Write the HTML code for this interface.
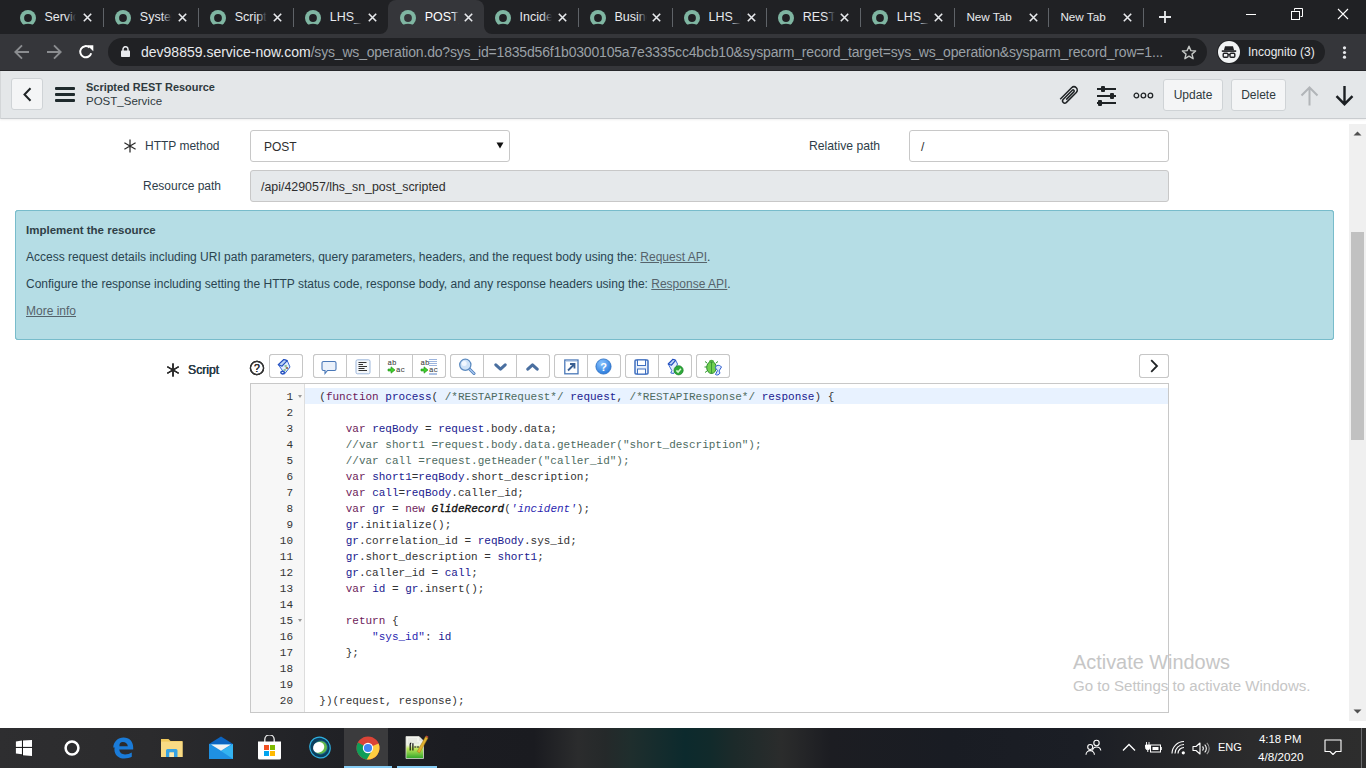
<!DOCTYPE html>
<html><head><meta charset="utf-8">
<style>
*{box-sizing:border-box;margin:0;padding:0}
html,body{width:1366px;height:768px;overflow:hidden;background:#fff;font-family:"Liberation Sans",sans-serif;position:relative}
.abs{position:absolute}
/* tab strip */
#tabs{left:0;top:0;width:1366px;height:34px;background:#202124}
.tt{position:absolute;top:9px;width:32px;height:16px;overflow:hidden;white-space:nowrap;color:#e8eaed;font-size:12.5px;line-height:16px}
.tt:after{content:"";position:absolute;right:0;top:0;width:10px;height:16px;background:linear-gradient(90deg,rgba(32,33,36,0),#202124)}
.tt.act{color:#fff;width:34px}
.tt.act:after{background:linear-gradient(90deg,rgba(53,54,58,0),#35363a);width:6px}
#active{background:#35363a;border-radius:8px 8px 0 0}
.tt.nt{width:60px;font-size:11.7px}
.tt.nt:after{display:none}
/* toolbar */
#toolbar{left:0;top:34px;width:1366px;height:37px;background:#35363a;border-bottom:1px solid #27282b}
#omni{left:108px;top:4px;width:1099px;height:28px;border-radius:14px;background:#202124}
#url{left:33px;top:5px;font-size:14px;letter-spacing:-0.185px;line-height:18px;color:#9aa0a6;white-space:nowrap}
#url b{font-weight:normal;color:#e8eaed;font-size:14px;letter-spacing:0}
#incog{left:1217px;top:6px;width:108px;height:24px;border-radius:12px;background:#202124}
/* servicenow header */
#snhead{left:0;top:71px;width:1366px;height:48px;background:#e4e7e9;border-bottom:1px solid #c9cccf;box-shadow:0 1px 2px rgba(0,0,0,0.07)}
.btn{position:absolute;background:#f4f5f6;border:1px solid #cfd3d6;border-radius:3px;color:#2f3a3e;font-size:13px;text-align:center}
/* content */
.lbl{position:absolute;font-size:12px;color:#2e3d49;line-height:14px;white-space:nowrap}
.inp{position:absolute;border:1px solid #c8c8c8;border-radius:3px;background:#fff;font-size:12px;color:#2e2e2e;line-height:14px;padding:9px 13px 0}
#info{left:15px;top:210px;width:1319px;height:130px;background:#b5dde5;border:1px solid #78bccb;border-radius:3px}
#info p{position:absolute;left:10px;font-size:12px;color:#2a4450;white-space:nowrap;line-height:14px}
#info a{color:#55636b;text-decoration:underline}
/* scrollbar */
#sb{left:1349px;top:124px;width:17px;height:597px;background:#f0f0f0}
#thumb{left:2px;top:108px;width:13px;height:208px;background:#c1c1c1}
/* editor */
#ed{left:250px;top:383px;width:919px;height:330px;border:1px solid #c8c8c8;border-top-color:#c8c8c8;background:#fff;overflow:hidden}
#gut{left:0;top:0;width:54px;height:330px;background:#f7f7f7;border-right:1px solid #ddd}
.ln{position:absolute;left:0;width:42px;text-align:right;font-family:"Liberation Mono",monospace;font-size:11px;color:#333;line-height:16px}
.cl{position:absolute;left:68.3px;font-family:"Liberation Mono",monospace;font-size:11px;color:#333;line-height:16px;white-space:pre}
.k{color:#6d1a5a}.v{color:#20208f}.c{color:#4e6b5f}.s{color:#2a1fb0}
.fold{width:0;height:0;border-left:2.5px solid transparent;border-right:2.5px solid transparent;border-top:3px solid #999}
.grp{position:absolute;top:354px;height:24px;border:1px solid #c6c6c6;border-radius:3px;background:#fff}
.grp i{position:absolute;top:0;width:1px;height:22px;background:#c6c6c6}
/* taskbar */
#task{left:0;top:728px;width:1366px;height:40px;background:linear-gradient(90deg,#2e2e30 0px,#2b2b2d 150px,#222327 300px,#1b1c21 450px,#1a1b20 534px,#2b2c2d 578px,#25292a 605px,#1f2e2d 630px,#0c2a2d 685px,#112a2b 710px,#1c2a2a 734px,#2b2c2c 782px,#1c1d22 830px,#191c23 950px,#1b1e25 1080px,#232427 1160px,#2b2b2c 1250px,#2d2d2d 1366px)}
</style></head><body>

<div id="tabs" class="abs">
<div class="abs" id="active" style="left:388px;top:0;width:96px;height:34px"></div>
<svg class="abs" style="left:380px;top:26px" width="8" height="8" viewBox="0 0 8 8"><path d="M0 8A8 8 0 0 0 8 0V8Z" fill="#35363a"/></svg>
<svg class="abs" style="left:484px;top:26px" width="8" height="8" viewBox="0 0 8 8"><path d="M8 8A8 8 0 0 1 0 0V8Z" fill="#35363a"/></svg>
<svg class="abs fav" style="left:19.6px;top:9.5px" width="16" height="16" viewBox="0 0 16 16"><circle cx="8" cy="8" r="8" fill="#7fb6a2"/><circle cx="8" cy="8" r="3.9" fill="#202124"/><ellipse cx="8" cy="16.6" rx="5" ry="2.9" fill="#202124"/></svg>
<div class="tt" style="left:44.4px">Servic</div>
<svg class="abs" style="left:83.4px;top:12.5px" width="9" height="9" viewBox="0 0 9 9"><path d="M0.8 0.8L8.2 8.2M8.2 0.8L0.8 8.2" stroke="#e8eaed" stroke-width="1.6"/></svg>
<svg class="abs fav" style="left:115.0px;top:9.5px" width="16" height="16" viewBox="0 0 16 16"><circle cx="8" cy="8" r="8" fill="#7fb6a2"/><circle cx="8" cy="8" r="3.9" fill="#202124"/><ellipse cx="8" cy="16.6" rx="5" ry="2.9" fill="#202124"/></svg>
<div class="tt" style="left:139.8px">System</div>
<svg class="abs" style="left:178.3px;top:12.5px" width="9" height="9" viewBox="0 0 9 9"><path d="M0.8 0.8L8.2 8.2M8.2 0.8L0.8 8.2" stroke="#e8eaed" stroke-width="1.6"/></svg>
<svg class="abs fav" style="left:209.9px;top:9.5px" width="16" height="16" viewBox="0 0 16 16"><circle cx="8" cy="8" r="8" fill="#7fb6a2"/><circle cx="8" cy="8" r="3.9" fill="#202124"/><ellipse cx="8" cy="16.6" rx="5" ry="2.9" fill="#202124"/></svg>
<div class="tt" style="left:234.7px">Scripte</div>
<svg class="abs" style="left:273.1px;top:12.5px" width="9" height="9" viewBox="0 0 9 9"><path d="M0.8 0.8L8.2 8.2M8.2 0.8L0.8 8.2" stroke="#e8eaed" stroke-width="1.6"/></svg>
<svg class="abs fav" style="left:305.0px;top:9.5px" width="16" height="16" viewBox="0 0 16 16"><circle cx="8" cy="8" r="8" fill="#7fb6a2"/><circle cx="8" cy="8" r="3.9" fill="#202124"/><ellipse cx="8" cy="16.6" rx="5" ry="2.9" fill="#202124"/></svg>
<div class="tt" style="left:329.8px">LHS_S</div>
<svg class="abs" style="left:368.2px;top:12.5px" width="9" height="9" viewBox="0 0 9 9"><path d="M0.8 0.8L8.2 8.2M8.2 0.8L0.8 8.2" stroke="#e8eaed" stroke-width="1.6"/></svg>
<svg class="abs fav" style="left:399.9px;top:9.5px" width="16" height="16" viewBox="0 0 16 16"><circle cx="8" cy="8" r="8" fill="#7fb6a2"/><circle cx="8" cy="8" r="3.9" fill="#35363a"/><ellipse cx="8" cy="16.6" rx="5" ry="2.9" fill="#35363a"/></svg>
<div class="tt act" style="left:424.7px">POST_</div>
<svg class="abs" style="left:463.5px;top:12.5px" width="9" height="9" viewBox="0 0 9 9"><path d="M0.8 0.8L8.2 8.2M8.2 0.8L0.8 8.2" stroke="#e8eaed" stroke-width="1.6"/></svg>
<svg class="abs fav" style="left:494.8px;top:9.5px" width="16" height="16" viewBox="0 0 16 16"><circle cx="8" cy="8" r="8" fill="#7fb6a2"/><circle cx="8" cy="8" r="3.9" fill="#202124"/><ellipse cx="8" cy="16.6" rx="5" ry="2.9" fill="#202124"/></svg>
<div class="tt" style="left:519.6px">Incide</div>
<svg class="abs" style="left:558.1px;top:12.5px" width="9" height="9" viewBox="0 0 9 9"><path d="M0.8 0.8L8.2 8.2M8.2 0.8L0.8 8.2" stroke="#e8eaed" stroke-width="1.6"/></svg>
<svg class="abs fav" style="left:589.7px;top:9.5px" width="16" height="16" viewBox="0 0 16 16"><circle cx="8" cy="8" r="8" fill="#7fb6a2"/><circle cx="8" cy="8" r="3.9" fill="#202124"/><ellipse cx="8" cy="16.6" rx="5" ry="2.9" fill="#202124"/></svg>
<div class="tt" style="left:614.5px">Busine</div>
<svg class="abs" style="left:652.1px;top:12.5px" width="9" height="9" viewBox="0 0 9 9"><path d="M0.8 0.8L8.2 8.2M8.2 0.8L0.8 8.2" stroke="#e8eaed" stroke-width="1.6"/></svg>
<svg class="abs fav" style="left:683.7px;top:9.5px" width="16" height="16" viewBox="0 0 16 16"><circle cx="8" cy="8" r="8" fill="#7fb6a2"/><circle cx="8" cy="8" r="3.9" fill="#202124"/><ellipse cx="8" cy="16.6" rx="5" ry="2.9" fill="#202124"/></svg>
<div class="tt" style="left:708.5px">LHS_F</div>
<svg class="abs" style="left:746.6px;top:12.5px" width="9" height="9" viewBox="0 0 9 9"><path d="M0.8 0.8L8.2 8.2M8.2 0.8L0.8 8.2" stroke="#e8eaed" stroke-width="1.6"/></svg>
<svg class="abs fav" style="left:777.9px;top:9.5px" width="16" height="16" viewBox="0 0 16 16"><circle cx="8" cy="8" r="8" fill="#7fb6a2"/><circle cx="8" cy="8" r="3.9" fill="#202124"/><ellipse cx="8" cy="16.6" rx="5" ry="2.9" fill="#202124"/></svg>
<div class="tt" style="left:802.7px">REST</div>
<svg class="abs" style="left:840.2px;top:12.5px" width="9" height="9" viewBox="0 0 9 9"><path d="M0.8 0.8L8.2 8.2M8.2 0.8L0.8 8.2" stroke="#e8eaed" stroke-width="1.6"/></svg>
<svg class="abs fav" style="left:871.9px;top:9.5px" width="16" height="16" viewBox="0 0 16 16"><circle cx="8" cy="8" r="8" fill="#7fb6a2"/><circle cx="8" cy="8" r="3.9" fill="#202124"/><ellipse cx="8" cy="16.6" rx="5" ry="2.9" fill="#202124"/></svg>
<div class="tt" style="left:896.7px">LHS_S</div>
<svg class="abs" style="left:934.2px;top:12.5px" width="9" height="9" viewBox="0 0 9 9"><path d="M0.8 0.8L8.2 8.2M8.2 0.8L0.8 8.2" stroke="#e8eaed" stroke-width="1.6"/></svg>
<div class="abs" style="left:102.9px;top:8px;width:1px;height:19px;background:#5f6368"></div>
<div class="abs" style="left:198.1px;top:8px;width:1px;height:19px;background:#5f6368"></div>
<div class="abs" style="left:293.0px;top:8px;width:1px;height:19px;background:#5f6368"></div>
<div class="abs" style="left:577.9px;top:8px;width:1px;height:19px;background:#5f6368"></div>
<div class="abs" style="left:672.2px;top:8px;width:1px;height:19px;background:#5f6368"></div>
<div class="abs" style="left:766.1px;top:8px;width:1px;height:19px;background:#5f6368"></div>
<div class="abs" style="left:860.0px;top:8px;width:1px;height:19px;background:#5f6368"></div>
<div class="abs" style="left:954.0px;top:8px;width:1px;height:19px;background:#5f6368"></div>
<div class="abs" style="left:1048.1px;top:8px;width:1px;height:19px;background:#5f6368"></div>
<div class="abs" style="left:1142.5px;top:8px;width:1px;height:19px;background:#5f6368"></div>
<div class="tt nt" style="left:966.4px">New Tab</div>
<svg class="abs" style="left:1028.5px;top:12.5px" width="9" height="9" viewBox="0 0 9 9"><path d="M0.8 0.8L8.2 8.2M8.2 0.8L0.8 8.2" stroke="#e8eaed" stroke-width="1.6"/></svg>
<div class="tt nt" style="left:1060.4px">New Tab</div>
<svg class="abs" style="left:1122.5px;top:12.5px" width="9" height="9" viewBox="0 0 9 9"><path d="M0.8 0.8L8.2 8.2M8.2 0.8L0.8 8.2" stroke="#e8eaed" stroke-width="1.6"/></svg>
<svg class="abs" style="left:1158px;top:10px" width="14" height="14" viewBox="0 0 14 14"><path d="M7 1V13M1 7H13" stroke="#e8eaed" stroke-width="1.8"/></svg>
<div class="abs" style="left:1246px;top:14px;width:10px;height:1px;background:#fff"></div>
<svg class="abs" style="left:1291px;top:8px" width="12" height="12" viewBox="0 0 12 12"><path d="M3.5 2.5V0.5H11.5V8.5H9.5" fill="none" stroke="#fff" stroke-width="1"/><rect x="0.5" y="3.5" width="8" height="8" fill="none" stroke="#fff" stroke-width="1"/></svg>
<svg class="abs" style="left:1337px;top:8px" width="12" height="12" viewBox="0 0 12 12"><path d="M1 1L11 11M11 1L1 11" stroke="#fff" stroke-width="1.1"/></svg>
</div>
<div id="toolbar" class="abs">
  <div id="omni" class="abs">
    <svg class="abs" style="left:13px;top:8px" width="9" height="11" viewBox="0 0 9 11"><path d="M2 5V3.2A2.5 2.5 0 0 1 7 3.2V5" fill="none" stroke="#e8eaed" stroke-width="1.5"/><rect x="0" y="4.6" width="9" height="6.4" rx="0.8" fill="#e8eaed"/></svg>
    <div id="url" class="abs"><b>dev98859.service-now.com</b>/sys_ws_operation.do?sys_id=1835d56f1b0300105a7e3335cc4bcb10&amp;sysparm_record_target=sys_ws_operation&amp;sysparm_record_row=1...</div>
  </div>
  <div id="incog" class="abs">
    <svg class="abs" style="left:1px;top:1px" width="22" height="22" viewBox="0 0 22 22"><circle cx="11" cy="11" r="11" fill="#f1f3f4"/><path d="M7 5.2h8l1.2 4.3H5.8z" fill="#202124"/><rect x="3.8" y="9.3" width="14.4" height="1.6" fill="#202124"/><rect x="5.2" y="12.2" width="4.8" height="4" rx="1" fill="none" stroke="#202124" stroke-width="1.4"/><rect x="12" y="12.2" width="4.8" height="4" rx="1" fill="none" stroke="#202124" stroke-width="1.4"/><path d="M10 13.6h2" stroke="#202124" stroke-width="1.2"/></svg>
    <div class="abs" style="left:31px;top:4px;font-size:12px;line-height:16px;color:#e8eaed;white-space:nowrap">Incognito (3)</div>
  </div>
  <svg class="abs" style="left:1342px;top:12px" width="5" height="13" viewBox="0 0 5 13"><circle cx="2.5" cy="1.8" r="1.6" fill="#e8eaed"/><circle cx="2.5" cy="6.5" r="1.6" fill="#e8eaed"/><circle cx="2.5" cy="11.2" r="1.6" fill="#e8eaed"/></svg>
  <svg class="abs" style="left:14px;top:10px" width="16" height="16" viewBox="0 0 16 16"><path d="M15 8H2M8 1.3L1.3 8L8 14.7" fill="none" stroke="#8b8d90" stroke-width="1.9"/></svg>
  <svg class="abs" style="left:46px;top:10px" width="16" height="16" viewBox="0 0 16 16"><path d="M1 8H14M8 1.3L14.7 8L8 14.7" fill="none" stroke="#8b8d90" stroke-width="1.9"/></svg>
  <svg class="abs" style="left:78px;top:10px" width="16" height="16" viewBox="0 0 16 16"><path d="M13.2 9.2A5.6 5.6 0 1 1 11.5 3.5" fill="none" stroke="#fff" stroke-width="2"/><path d="M9.2 1.2H15.3V7.3z" fill="#fff"/></svg>
  <svg class="abs" style="left:1181px;top:11px" width="16" height="15" viewBox="0 0 16 15"><path d="M8 1.2L9.9 5.6L14.6 6L11 9.1L12.1 13.7L8 11.2L3.9 13.7L5 9.1L1.4 6L6.1 5.6z" fill="none" stroke="#c4c7c5" stroke-width="1.4" stroke-linejoin="round"/></svg>
</div>

<div id="snhead" class="abs">
  <div class="abs" style="left:0;top:0;width:1px;height:48px;background:#d3d6d8"></div>
  <div class="btn" style="left:11px;top:7px;width:32px;height:32px"></div>
  <svg class="abs" style="left:22px;top:16px" width="11" height="15" viewBox="0 0 11 15"><path d="M8.5 1.2L2.5 7.5L8.5 13.8" fill="none" stroke="#1f2426" stroke-width="2"/></svg>
  <div class="abs" style="left:55px;top:16px;width:20px;height:3px;background:#1f2a2c;border-radius:1px"></div>
  <div class="abs" style="left:55px;top:22px;width:20px;height:3px;background:#1f2a2c;border-radius:1px"></div>
  <div class="abs" style="left:55px;top:28px;width:20px;height:3px;background:#1f2a2c;border-radius:1px"></div>
  <div class="abs" style="left:86px;top:9px;font-size:10.95px;line-height:14px;font-weight:bold;color:#2f3a3e;white-space:nowrap">Scripted REST Resource</div>
  <div class="abs" style="left:86px;top:23px;font-size:11.5px;line-height:14px;color:#2f3a3e;white-space:nowrap">POST_Service</div>
  <svg class="abs" style="left:1059px;top:13px" width="21" height="21" viewBox="0 0 21 21"><path d="M1.2 15.2L12.6 3.8A3.3 3.3 0 0 1 17.3 8.5L7.2 18.6A2.2 2.2 0 0 1 4.1 15.5L13.3 6.3A1.1 1.1 0 0 1 14.9 7.9L7.2 15.6" fill="none" stroke="#1f2325" stroke-width="1.5"/></svg>
  <div class="abs" style="left:1097px;top:17px;width:19px;height:2px;background:#1f2325"></div>
  <div class="abs" style="left:1097px;top:24px;width:19px;height:2px;background:#1f2325"></div>
  <div class="abs" style="left:1097px;top:31px;width:19px;height:2px;background:#1f2325"></div>
  <div class="abs" style="left:1101px;top:14.5px;width:4px;height:6px;background:#1f2325;border-radius:1px"></div>
  <div class="abs" style="left:1110px;top:21.5px;width:4px;height:6px;background:#1f2325;border-radius:1px"></div>
  <div class="abs" style="left:1098px;top:28.5px;width:4px;height:6px;background:#1f2325;border-radius:1px"></div>
  <svg class="abs" style="left:1133px;top:21px" width="21" height="7" viewBox="0 0 21 7"><circle cx="3.4" cy="3.5" r="2.3" fill="none" stroke="#1f2325" stroke-width="1.3"/><circle cx="10.4" cy="3.5" r="2.3" fill="none" stroke="#1f2325" stroke-width="1.3"/><circle cx="17.4" cy="3.5" r="2.3" fill="none" stroke="#1f2325" stroke-width="1.3"/></svg>
  <div class="btn" style="left:1163px;top:8px;width:60px;height:32px;line-height:30px;font-size:12px">Update</div>
  <div class="btn" style="left:1231px;top:8px;width:55px;height:32px;line-height:30px;font-size:12px">Delete</div>
  <svg class="abs" style="left:1300px;top:15px" width="19" height="20" viewBox="0 0 19 20"><path d="M9.5 19.5V1.5M1.5 9.5L9.5 1.5L17.5 9.5" fill="none" stroke="#b1b5b8" stroke-width="2"/></svg>
  <svg class="abs" style="left:1335px;top:15px" width="19" height="20" viewBox="0 0 19 20"><path d="M9.5 0V18.2M1.5 10.2L9.5 18.2L17.5 10.2" fill="none" stroke="#1b1f22" stroke-width="2.4"/></svg>
</div>

<svg class="abs" style="left:123px;top:139px" width="14" height="14" viewBox="0 0 14 14"><path d="M7 0.5V13.5M1.4 3.8L12.6 10.2M12.6 3.8L1.4 10.2" stroke="#2a2a2a" stroke-width="1.25"/></svg>
<div class="lbl" style="left:145px;top:139px">HTTP method</div>
<div class="inp" style="left:250px;top:130px;width:260px;height:32px">POST</div>
<svg class="abs" style="left:496px;top:142px" width="8" height="7" viewBox="0 0 8 7"><path d="M0.5 0.5H7.5L4 6.5Z" fill="#111"/></svg>
<div class="lbl" style="left:809px;top:139px;font-size:12.2px">Relative path</div>
<div class="inp" style="left:909px;top:130px;width:260px;height:32px;padding-left:11px">/</div>
<div class="lbl" style="left:143px;top:179px">Resource path</div>
<div class="inp" style="left:250px;top:170px;width:919px;height:32px;background:#e6e9eb;padding-left:10px;font-size:12.4px">/api/429057/lhs_sn_post_scripted</div>

<div id="info" class="abs">
  <p style="top:11.5px;font-weight:bold;font-size:11.5px;color:#2f3f47">Implement the resource</p>
  <p style="top:39px">Access request details including URI path parameters, query parameters, headers, and the request body using the: <a>Request API</a>.</p>
  <p style="top:66.3px">Configure the response including setting the HTTP status code, response body, and any response headers using the: <a>Response API</a>.</p>
  <p style="top:93px"><a>More info</a></p>
</div>

<svg class="abs" style="left:166px;top:363px" width="14" height="14" viewBox="0 0 14 14"><path d="M7 0.5V13.5M1.4 3.8L12.6 10.2M12.6 3.8L1.4 10.2" stroke="#2a2a2a" stroke-width="1.25"/></svg>
<div class="lbl" style="left:188px;top:363px;font-size:12.2px">Script</div>
<div class="grp" style="left:269px;width:34px"></div>
<div class="grp" style="left:313px;width:133px"><i style="left:32px"></i><i style="left:65px"></i><i style="left:98px"></i></div>
<div class="grp" style="left:450px;width:100px"><i style="left:32px"></i><i style="left:65px"></i></div>
<div class="grp" style="left:554px;width:67px"><i style="left:32px"></i></div>
<div class="grp" style="left:625px;width:67px"><i style="left:32px"></i></div>
<div class="grp" style="left:696px;width:34px"></div>
<div class="grp" style="left:1139px;width:30px"></div>
<svg class="abs" style="left:1150px;top:359px" width="9" height="14" viewBox="0 0 9 14"><path d="M1.2 1.2L7 7L1.2 12.8" fill="none" stroke="#1f2325" stroke-width="1.8"/></svg>
<!-- help circle -->
<svg class="abs" style="left:249px;top:360px" width="16" height="16" viewBox="0 0 16 16"><circle cx="8" cy="8" r="6.6" fill="none" stroke="#333" stroke-width="1.2"/><text x="8" y="11.8" text-anchor="middle" font-family="Liberation Sans" font-size="10.5" fill="#333">?</text></svg>
<!-- script scroll icon -->
<svg class="abs" style="left:277px;top:358px" width="16" height="18" viewBox="0 0 16 18"><path d="M1.6 6.6L9.6 1.8L12.8 8.8L4.6 15.3Z" fill="#eef4fd" stroke="#4a78d8" stroke-width="0.9" stroke-linejoin="round"/><path d="M1.8 6.3L9.6 1.6" stroke="#2048b8" stroke-width="3.2" stroke-linecap="round"/><path d="M2.6 6L9.2 2" stroke="#b8d0f6" stroke-width="1.2" stroke-linecap="round"/><path d="M4.2 14.8L12.4 8.6" stroke="#6a94e0" stroke-width="1.2"/><circle cx="4.4" cy="14.8" r="1.9" fill="#dce8fb" stroke="#2048b8" stroke-width="1.3"/><path d="M6.8 7.6H9.6M7.2 11.4H9.6" stroke="#3b9b3b" stroke-width="1.1"/><path d="M8.4 9.5H11" stroke="#a8342a" stroke-width="1.1"/></svg>
<!-- comment -->
<svg class="abs" style="left:321px;top:360px" width="16" height="15" viewBox="0 0 16 15"><path d="M2.5 1.5H13.5A1.5 1.5 0 0 1 15 3V9A1.5 1.5 0 0 1 13.5 10.5H6.5L4 13.5V10.5H2.5A1.5 1.5 0 0 1 1 9V3A1.5 1.5 0 0 1 2.5 1.5Z" fill="#eaf1fb" stroke="#4a78b8" stroke-width="1.1"/></svg>
<!-- format -->
<svg class="abs" style="left:355px;top:359px" width="16" height="16" viewBox="0 0 16 16"><rect x="1" y="0.8" width="14" height="14" rx="1.5" fill="#f4f7fb" stroke="#9db7dc" stroke-width="1"/><path d="M3.5 3.5H11.5M3.5 5.5H8M3.5 7.5H12M3.5 9.5H9.5M3.5 11.5H12" stroke="#333" stroke-width="1"/></svg>
<!-- replace -->
<svg class="abs" style="left:387px;top:359px" width="18" height="16" viewBox="0 0 18 16"><text x="0.5" y="6" font-family="Liberation Mono" font-size="7.5" fill="#333">ab</text><path d="M1 10H4V7.8L8 11L4 14.2V12H1Z" fill="#3fd02a" stroke="#1e8a17" stroke-width="0.6"/><text x="9" y="13" font-family="Liberation Mono" font-size="7.5" fill="#333">ac</text></svg>
<!-- replace all -->
<svg class="abs" style="left:420px;top:359px" width="18" height="16" viewBox="0 0 18 16"><text x="0.5" y="6" font-family="Liberation Mono" font-size="7.5" fill="#333">ab</text><path d="M9 0.5H17M9 2.5H17M9 4.5H17M9 6.5H17" stroke="#5a83c8" stroke-width="0.6"/><path d="M1 10H4V7.8L8 11L4 14.2V12H1Z" fill="#3fd02a" stroke="#1e8a17" stroke-width="0.6"/><text x="9" y="13" font-family="Liberation Mono" font-size="7.5" fill="#333">ac</text><path d="M9 15H17" stroke="#5a83c8" stroke-width="1"/></svg>
<!-- search -->
<svg class="abs" style="left:458px;top:358px" width="18" height="18" viewBox="0 0 18 18"><path d="M11.5 11L16 15.5" stroke="#4d7dbb" stroke-width="3" stroke-linecap="round"/><path d="M11.5 11L16 15.5" stroke="#a9c8ee" stroke-width="1.4" stroke-linecap="round"/><circle cx="7.3" cy="6.8" r="5.6" fill="#cfe3f8" stroke="#5b8ac0" stroke-width="1.3"/><circle cx="6.2" cy="5.6" r="2.5" fill="#f2f8ff"/></svg>
<!-- down chevron -->
<svg class="abs" style="left:494px;top:363px" width="13" height="9" viewBox="0 0 13 9"><path d="M1.8 1.8L6.5 6.2L11.2 1.8" fill="none" stroke="#4a6fa0" stroke-width="3" stroke-linejoin="round" stroke-linecap="round"/></svg>
<!-- up chevron -->
<svg class="abs" style="left:526px;top:362px" width="13" height="9" viewBox="0 0 13 9"><path d="M1.8 7.2L6.5 2.8L11.2 7.2" fill="none" stroke="#4a6fa0" stroke-width="3" stroke-linejoin="round" stroke-linecap="round"/></svg>
<!-- fullscreen -->
<svg class="abs" style="left:564px;top:359px" width="15" height="16" viewBox="0 0 15 16"><rect x="0.8" y="1" width="13.2" height="13.8" fill="#fff" stroke="#4a78b8" stroke-width="1.3"/><path d="M2 2.3H13" stroke="#b9cde8" stroke-width="1"/><path d="M4 11.5L10 5.5M6 5H10.5V9.5" fill="none" stroke="#3a5f92" stroke-width="1.8"/></svg>
<!-- help blue -->
<svg class="abs" style="left:595px;top:358px" width="17" height="17" viewBox="0 0 17 17"><defs><radialGradient id="hb" cx="0.4" cy="0.3" r="0.8"><stop offset="0" stop-color="#8ac4ff"/><stop offset="1" stop-color="#1f73d8"/></radialGradient></defs><circle cx="8.5" cy="8.5" r="7.6" fill="url(#hb)" stroke="#2a6cc0" stroke-width="0.8"/><text x="8.5" y="12.5" text-anchor="middle" font-family="Liberation Sans" font-weight="bold" font-size="11" fill="#fff">?</text></svg>
<!-- save -->
<svg class="abs" style="left:634px;top:359px" width="15" height="16" viewBox="0 0 15 16"><rect x="1" y="1" width="13" height="14" rx="1" fill="#e8f0fb" stroke="#3f6fc0" stroke-width="1.5"/><rect x="3.5" y="1" width="8" height="5.5" fill="#fff" stroke="#3f6fc0" stroke-width="1"/><rect x="3.5" y="10" width="8" height="5" fill="#fff" stroke="#3f6fc0" stroke-width="1"/></svg>
<!-- check script -->
<svg class="abs" style="left:667px;top:358px" width="18" height="18" viewBox="0 0 18 18"><path d="M1.4 6.8L9.4 1.8L11.5 8L3.8 15.3Z" fill="#eef4fd" stroke="#4a78d8" stroke-width="0.9" stroke-linejoin="round"/><path d="M1.6 6.5L9.4 1.6" stroke="#2048b8" stroke-width="3" stroke-linecap="round"/><path d="M2.4 6.2L9 2" stroke="#b8d0f6" stroke-width="1.1" stroke-linecap="round"/><circle cx="3.8" cy="14.8" r="1.7" fill="#dce8fb" stroke="#2048b8" stroke-width="1.2"/><circle cx="11.6" cy="12.3" r="4.5" fill="#2da83a" stroke="#1b7f27" stroke-width="0.7"/><path d="M9.4 12.4L11.1 14.1L13.9 10.8" fill="none" stroke="#d9f7d6" stroke-width="1.5"/></svg>
<!-- debug -->
<svg class="abs" style="left:704px;top:358px" width="19" height="18" viewBox="0 0 19 18"><path d="M3.8 5.5L1 4.6M3.2 9.5H0.6M3.8 13.8L1 15M10.6 5.5L13 4.6" stroke="#2d8a2d" stroke-width="1"/><ellipse cx="7.2" cy="10" rx="3.7" ry="5.8" fill="#5fcf4f" stroke="#2d8a2d" stroke-width="0.9"/><ellipse cx="7.2" cy="3.6" rx="2.5" ry="1.6" fill="#3fa03a"/><path d="M7.2 5V15.3" stroke="#b9efb0" stroke-width="1"/><path d="M10.6 10.8L16.4 6.6L17.6 12.6L11.4 17Z" fill="#eef4fd" stroke="#4a78d8" stroke-width="0.9" stroke-linejoin="round"/><path d="M10.8 10.6L16.4 6.6" stroke="#2048b8" stroke-width="2.6" stroke-linecap="round"/><circle cx="11.6" cy="16.2" r="1.5" fill="#dce8fb" stroke="#2048b8" stroke-width="1.1"/></svg>
<div id="info" class="abs">
  <p style="top:11.5px;font-weight:bold;font-size:11.5px;color:#2f3f47">Implement the resource</p>
  <p style="top:39px">Access request details including URI path parameters, query parameters, headers, and the request body using the: <a>Request API</a>.</p>
  <p style="top:66.3px">Configure the response including setting the HTTP status code, response body, and any response headers using the: <a>Response API</a>.</p>
  <p style="top:93px"><a>More info</a></p>
</div>

<svg class="abs" style="left:166px;top:363px" width="14" height="14" viewBox="0 0 14 14"><path d="M7 0.5V13.5M1.4 3.8L12.6 10.2M12.6 3.8L1.4 10.2" stroke="#2a2a2a" stroke-width="1.25"/></svg>
<div class="lbl" style="left:188px;top:363px;font-size:12.2px">Script</div>
<div class="grp" style="left:269px;width:34px"></div>
<div class="grp" style="left:313px;width:133px"><i style="left:32px"></i><i style="left:65px"></i><i style="left:98px"></i></div>
<div class="grp" style="left:450px;width:100px"><i style="left:32px"></i><i style="left:65px"></i></div>
<div class="grp" style="left:554px;width:67px"><i style="left:32px"></i></div>
<div class="grp" style="left:625px;width:67px"><i style="left:32px"></i></div>
<div class="grp" style="left:696px;width:34px"></div>
<div class="grp" style="left:1139px;width:30px"></div>
<svg class="abs" style="left:1150px;top:359px" width="9" height="14" viewBox="0 0 9 14"><path d="M1.2 1.2L7 7L1.2 12.8" fill="none" stroke="#1f2325" stroke-width="1.8"/></svg>
<!-- help circle -->
<svg class="abs" style="left:249px;top:360px" width="16" height="16" viewBox="0 0 16 16"><circle cx="8" cy="8" r="6.6" fill="none" stroke="#333" stroke-width="1.2"/><text x="8" y="11.8" text-anchor="middle" font-family="Liberation Sans" font-size="10.5" fill="#333">?</text></svg>
<!-- script scroll icon -->
<svg class="abs" style="left:277px;top:358px" width="16" height="18" viewBox="0 0 16 18"><path d="M1.6 6.6L9.6 1.8L12.8 8.8L4.6 15.3Z" fill="#eef4fd" stroke="#4a78d8" stroke-width="0.9" stroke-linejoin="round"/><path d="M1.8 6.3L9.6 1.6" stroke="#2048b8" stroke-width="3.2" stroke-linecap="round"/><path d="M2.6 6L9.2 2" stroke="#b8d0f6" stroke-width="1.2" stroke-linecap="round"/><path d="M4.2 14.8L12.4 8.6" stroke="#6a94e0" stroke-width="1.2"/><circle cx="4.4" cy="14.8" r="1.9" fill="#dce8fb" stroke="#2048b8" stroke-width="1.3"/><path d="M6.8 7.6H9.6M7.2 11.4H9.6" stroke="#3b9b3b" stroke-width="1.1"/><path d="M8.4 9.5H11" stroke="#a8342a" stroke-width="1.1"/></svg>
<!-- comment -->
<svg class="abs" style="left:321px;top:360px" width="16" height="15" viewBox="0 0 16 15"><path d="M2.5 1.5H13.5A1.5 1.5 0 0 1 15 3V9A1.5 1.5 0 0 1 13.5 10.5H6.5L4 13.5V10.5H2.5A1.5 1.5 0 0 1 1 9V3A1.5 1.5 0 0 1 2.5 1.5Z" fill="#eaf1fb" stroke="#4a78b8" stroke-width="1.1"/></svg>
<!-- format -->
<svg class="abs" style="left:355px;top:359px" width="16" height="16" viewBox="0 0 16 16"><rect x="1" y="0.8" width="14" height="14" rx="1.5" fill="#f4f7fb" stroke="#9db7dc" stroke-width="1"/><path d="M3.5 3.5H11.5M3.5 5.5H8M3.5 7.5H12M3.5 9.5H9.5M3.5 11.5H12" stroke="#333" stroke-width="1"/></svg>
<!-- replace -->
<svg class="abs" style="left:387px;top:359px" width="18" height="16" viewBox="0 0 18 16"><text x="0.5" y="6" font-family="Liberation Mono" font-size="7.5" fill="#333">ab</text><path d="M1 10H4V7.8L8 11L4 14.2V12H1Z" fill="#3fd02a" stroke="#1e8a17" stroke-width="0.6"/><text x="9" y="13" font-family="Liberation Mono" font-size="7.5" fill="#333">ac</text></svg>
<!-- replace all -->
<svg class="abs" style="left:420px;top:359px" width="18" height="16" viewBox="0 0 18 16"><text x="0.5" y="6" font-family="Liberation Mono" font-size="7.5" fill="#333">ab</text><path d="M9 0.5H17M9 2.5H17M9 4.5H17M9 6.5H17" stroke="#5a83c8" stroke-width="0.6"/><path d="M1 10H4V7.8L8 11L4 14.2V12H1Z" fill="#3fd02a" stroke="#1e8a17" stroke-width="0.6"/><text x="9" y="13" font-family="Liberation Mono" font-size="7.5" fill="#333">ac</text><path d="M9 15H17" stroke="#5a83c8" stroke-width="1"/></svg>
<!-- search -->
<svg class="abs" style="left:458px;top:358px" width="18" height="18" viewBox="0 0 18 18"><path d="M11.5 11L16 15.5" stroke="#4d7dbb" stroke-width="3" stroke-linecap="round"/><path d="M11.5 11L16 15.5" stroke="#a9c8ee" stroke-width="1.4" stroke-linecap="round"/><circle cx="7.3" cy="6.8" r="5.6" fill="#cfe3f8" stroke="#5b8ac0" stroke-width="1.3"/><circle cx="6.2" cy="5.6" r="2.5" fill="#f2f8ff"/></svg>
<!-- down chevron -->
<svg class="abs" style="left:494px;top:363px" width="13" height="9" viewBox="0 0 13 9"><path d="M1.8 1.8L6.5 6.2L11.2 1.8" fill="none" stroke="#4a6fa0" stroke-width="3" stroke-linejoin="round" stroke-linecap="round"/></svg>
<!-- up chevron -->
<svg class="abs" style="left:526px;top:362px" width="13" height="9" viewBox="0 0 13 9"><path d="M1.8 7.2L6.5 2.8L11.2 7.2" fill="none" stroke="#4a6fa0" stroke-width="3" stroke-linejoin="round" stroke-linecap="round"/></svg>
<!-- fullscreen -->
<svg class="abs" style="left:564px;top:359px" width="15" height="16" viewBox="0 0 15 16"><rect x="0.8" y="1" width="13.2" height="13.8" fill="#fff" stroke="#4a78b8" stroke-width="1.3"/><path d="M2 2.3H13" stroke="#b9cde8" stroke-width="1"/><path d="M4 11.5L10 5.5M6 5H10.5V9.5" fill="none" stroke="#3a5f92" stroke-width="1.8"/></svg>
<!-- help blue -->
<svg class="abs" style="left:595px;top:358px" width="17" height="17" viewBox="0 0 17 17"><defs><radialGradient id="hb" cx="0.4" cy="0.3" r="0.8"><stop offset="0" stop-color="#8ac4ff"/><stop offset="1" stop-color="#1f73d8"/></radialGradient></defs><circle cx="8.5" cy="8.5" r="7.6" fill="url(#hb)" stroke="#2a6cc0" stroke-width="0.8"/><text x="8.5" y="12.5" text-anchor="middle" font-family="Liberation Sans" font-weight="bold" font-size="11" fill="#fff">?</text></svg>
<!-- save -->
<svg class="abs" style="left:634px;top:359px" width="15" height="16" viewBox="0 0 15 16"><rect x="1" y="1" width="13" height="14" rx="1" fill="#e8f0fb" stroke="#3f6fc0" stroke-width="1.5"/><rect x="3.5" y="1" width="8" height="5.5" fill="#fff" stroke="#3f6fc0" stroke-width="1"/><rect x="3.5" y="10" width="8" height="5" fill="#fff" stroke="#3f6fc0" stroke-width="1"/></svg>
<!-- check script -->
<svg class="abs" style="left:667px;top:358px" width="18" height="18" viewBox="0 0 18 18"><path d="M1.4 6.8L9.4 1.8L11.5 8L3.8 15.3Z" fill="#eef4fd" stroke="#4a78d8" stroke-width="0.9" stroke-linejoin="round"/><path d="M1.6 6.5L9.4 1.6" stroke="#2048b8" stroke-width="3" stroke-linecap="round"/><path d="M2.4 6.2L9 2" stroke="#b8d0f6" stroke-width="1.1" stroke-linecap="round"/><circle cx="3.8" cy="14.8" r="1.7" fill="#dce8fb" stroke="#2048b8" stroke-width="1.2"/><circle cx="11.6" cy="12.3" r="4.5" fill="#2da83a" stroke="#1b7f27" stroke-width="0.7"/><path d="M9.4 12.4L11.1 14.1L13.9 10.8" fill="none" stroke="#d9f7d6" stroke-width="1.5"/></svg>
<!-- debug -->
<svg class="abs" style="left:704px;top:358px" width="19" height="18" viewBox="0 0 19 18"><path d="M4.5 5.5L1.5 4.5M3.5 9.5H1M4.5 13.5L1.5 14.5M10.5 5.5L12.5 4.5" stroke="#2d8a2d" stroke-width="1"/><ellipse cx="7.6" cy="10" rx="3.8" ry="6" fill="#5fcf4f" stroke="#2d8a2d" stroke-width="0.9"/><ellipse cx="7.6" cy="3.4" rx="2.6" ry="1.6" fill="#3fa03a"/><path d="M7.6 5V15.5" stroke="#b9efb0" stroke-width="1"/><path d="M14.6 6.5L17 7.5L17.5 10L13.5 17L10.8 16L11.5 13.5L11.5 10Z" fill="#e3eefc" stroke="#2450c0" stroke-width="1.1" stroke-linejoin="round"/><path d="M14.6 6.5L17 7.5L13 12L11.5 10Z" fill="#bcd3f5" stroke="#2450c0" stroke-width="1" stroke-linejoin="round"/></svg>
<div id="info" class="abs">
  <p style="top:11.5px;font-weight:bold;font-size:11.5px;color:#2f3f47">Implement the resource</p>
  <p style="top:39px">Access request details including URI path parameters, query parameters, headers, and the request body using the: <a>Request API</a>.</p>
  <p style="top:66.3px">Configure the response including setting the HTTP status code, response body, and any response headers using the: <a>Response API</a>.</p>
  <p style="top:93px"><a>More info</a></p>
</div>

<svg class="abs" style="left:166px;top:363px" width="14" height="14" viewBox="0 0 14 14"><path d="M7 0.5V13.5M1.4 3.8L12.6 10.2M12.6 3.8L1.4 10.2" stroke="#2a2a2a" stroke-width="1.25"/></svg>
<div class="lbl" style="left:188px;top:363px;font-size:12.2px">Script</div>
<div class="grp" style="left:269px;width:34px"></div>
<div class="grp" style="left:313px;width:133px"><i style="left:32px"></i><i style="left:65px"></i><i style="left:98px"></i></div>
<div class="grp" style="left:450px;width:100px"><i style="left:32px"></i><i style="left:65px"></i></div>
<div class="grp" style="left:554px;width:67px"><i style="left:32px"></i></div>
<div class="grp" style="left:625px;width:67px"><i style="left:32px"></i></div>
<div class="grp" style="left:696px;width:34px"></div>
<div class="grp" style="left:1139px;width:30px"></div>
<svg class="abs" style="left:1150px;top:359px" width="9" height="14" viewBox="0 0 9 14"><path d="M1.2 1.2L7 7L1.2 12.8" fill="none" stroke="#1f2325" stroke-width="1.8"/></svg>
<!-- help circle -->
<svg class="abs" style="left:249px;top:360px" width="16" height="16" viewBox="0 0 16 16"><circle cx="8" cy="8" r="6.6" fill="none" stroke="#333" stroke-width="1.2"/><text x="8" y="11.8" text-anchor="middle" font-family="Liberation Sans" font-size="10.5" fill="#333">?</text></svg>
<!-- script scroll icon -->
<svg class="abs" style="left:277px;top:358px" width="16" height="18" viewBox="0 0 16 18"><path d="M6.8 1.5L10.2 2.6L13 9L7.5 16L4.2 15L5.5 12.6L1.3 6.6Z" fill="#e3eefc" stroke="#3a68d0" stroke-width="1" stroke-linejoin="round"/><path d="M6.8 1.5L10.2 2.6L5 8.2L1.3 6.6Z" fill="#bcd3f5" stroke="#2450c0" stroke-width="1.2" stroke-linejoin="round"/><ellipse cx="5.6" cy="14.6" rx="1.8" ry="1.4" fill="#fff" stroke="#2450c0" stroke-width="1.4"/><path d="M7.6 8H9.8M8.8 10H11M6.6 12H8.8" stroke="#3b9b3b" stroke-width="1.1"/><path d="M8.8 10H11" stroke="#b0382e" stroke-width="1.1"/></svg>
<!-- comment -->
<svg class="abs" style="left:321px;top:360px" width="16" height="15" viewBox="0 0 16 15"><path d="M2.5 1.5H13.5A1.5 1.5 0 0 1 15 3V9A1.5 1.5 0 0 1 13.5 10.5H6.5L4 13.5V10.5H2.5A1.5 1.5 0 0 1 1 9V3A1.5 1.5 0 0 1 2.5 1.5Z" fill="#eaf1fb" stroke="#4a78b8" stroke-width="1.1"/></svg>
<!-- format -->
<svg class="abs" style="left:355px;top:359px" width="16" height="16" viewBox="0 0 16 16"><rect x="1" y="0.8" width="14" height="14" rx="1.5" fill="#f4f7fb" stroke="#9db7dc" stroke-width="1"/><path d="M3.5 3.5H11.5M3.5 5.5H8M3.5 7.5H12M3.5 9.5H9.5M3.5 11.5H12" stroke="#333" stroke-width="1"/></svg>
<!-- replace -->
<svg class="abs" style="left:387px;top:359px" width="18" height="16" viewBox="0 0 18 16"><text x="0.5" y="6" font-family="Liberation Mono" font-size="7.5" fill="#333">ab</text><path d="M1 10H4V7.8L8 11L4 14.2V12H1Z" fill="#3fd02a" stroke="#1e8a17" stroke-width="0.6"/><text x="9" y="13" font-family="Liberation Mono" font-size="7.5" fill="#333">ac</text></svg>
<!-- replace all -->
<svg class="abs" style="left:420px;top:359px" width="18" height="16" viewBox="0 0 18 16"><text x="0.5" y="6" font-family="Liberation Mono" font-size="7.5" fill="#333">ab</text><path d="M9 0.5H17M9 2.5H17M9 4.5H17M9 6.5H17" stroke="#5a83c8" stroke-width="0.6"/><path d="M1 10H4V7.8L8 11L4 14.2V12H1Z" fill="#3fd02a" stroke="#1e8a17" stroke-width="0.6"/><text x="9" y="13" font-family="Liberation Mono" font-size="7.5" fill="#333">ac</text><path d="M9 15H17" stroke="#5a83c8" stroke-width="1"/></svg>
<!-- search -->
<svg class="abs" style="left:458px;top:358px" width="18" height="18" viewBox="0 0 18 18"><path d="M11.5 11L16 15.5" stroke="#4d7dbb" stroke-width="3" stroke-linecap="round"/><path d="M11.5 11L16 15.5" stroke="#a9c8ee" stroke-width="1.4" stroke-linecap="round"/><circle cx="7.3" cy="6.8" r="5.6" fill="#cfe3f8" stroke="#5b8ac0" stroke-width="1.3"/><circle cx="6.2" cy="5.6" r="2.5" fill="#f2f8ff"/></svg>
<!-- down chevron -->
<svg class="abs" style="left:494px;top:363px" width="13" height="9" viewBox="0 0 13 9"><path d="M1.8 1.8L6.5 6.2L11.2 1.8" fill="none" stroke="#4a6fa0" stroke-width="3" stroke-linejoin="round" stroke-linecap="round"/></svg>
<!-- up chevron -->
<svg class="abs" style="left:526px;top:362px" width="13" height="9" viewBox="0 0 13 9"><path d="M1.8 7.2L6.5 2.8L11.2 7.2" fill="none" stroke="#4a6fa0" stroke-width="3" stroke-linejoin="round" stroke-linecap="round"/></svg>
<!-- fullscreen -->
<svg class="abs" style="left:564px;top:359px" width="15" height="16" viewBox="0 0 15 16"><rect x="0.8" y="1" width="13.2" height="13.8" fill="#fff" stroke="#4a78b8" stroke-width="1.3"/><path d="M2 2.3H13" stroke="#b9cde8" stroke-width="1"/><path d="M4 11.5L10 5.5M6 5H10.5V9.5" fill="none" stroke="#3a5f92" stroke-width="1.8"/></svg>
<!-- help blue -->
<svg class="abs" style="left:595px;top:358px" width="17" height="17" viewBox="0 0 17 17"><defs><radialGradient id="hb" cx="0.4" cy="0.3" r="0.8"><stop offset="0" stop-color="#8ac4ff"/><stop offset="1" stop-color="#1f73d8"/></radialGradient></defs><circle cx="8.5" cy="8.5" r="7.6" fill="url(#hb)" stroke="#2a6cc0" stroke-width="0.8"/><text x="8.5" y="12.5" text-anchor="middle" font-family="Liberation Sans" font-weight="bold" font-size="11" fill="#fff">?</text></svg>
<!-- save -->
<svg class="abs" style="left:634px;top:359px" width="15" height="16" viewBox="0 0 15 16"><rect x="1" y="1" width="13" height="14" rx="1" fill="#e8f0fb" stroke="#3f6fc0" stroke-width="1.5"/><rect x="3.5" y="1" width="8" height="5.5" fill="#fff" stroke="#3f6fc0" stroke-width="1"/><rect x="3.5" y="10" width="8" height="5" fill="#fff" stroke="#3f6fc0" stroke-width="1"/></svg>
<!-- check script -->
<svg class="abs" style="left:667px;top:358px" width="18" height="18" viewBox="0 0 18 18"><path d="M5.8 1.3L8.6 2.3L10.5 6L6.8 15.5L3.8 15L4.8 12.5L1.2 6Z" fill="#e3eefc" stroke="#3a68d0" stroke-width="1" stroke-linejoin="round"/><path d="M5.8 1.3L8.6 2.3L4.5 7.2L1.2 6Z" fill="#bcd3f5" stroke="#2450c0" stroke-width="1.2" stroke-linejoin="round"/><circle cx="11.6" cy="12.3" r="4.6" fill="#2da83a" stroke="#1b7f27" stroke-width="0.7"/><path d="M9.4 12.4L11.1 14.1L13.9 10.8" fill="none" stroke="#d9f7d6" stroke-width="1.5"/></svg>
<!-- debug -->
<svg class="abs" style="left:704px;top:358px" width="19" height="18" viewBox="0 0 19 18"><path d="M3 5L1 3.5M3 9H0.5M3 13L1 14.5M12 5L14 3.5M12 9H14.5" stroke="#2d9a2d" stroke-width="1"/><ellipse cx="7.5" cy="9.5" rx="4.8" ry="6" fill="#6fcf4f" stroke="#2d8a2d" stroke-width="1"/><ellipse cx="7.5" cy="3.5" rx="2.5" ry="1.8" fill="#4fae3f"/><path d="M7.5 4V15.5" stroke="#2d8a2d" stroke-width="0.8"/><path d="M13 7.5C14.5 7 16.5 7.5 17.5 9L15 13L16 15C15 17 13 17.5 11.5 16.5L13.5 12.5L11.5 10C11.5 9 12 8 13 7.5Z" fill="#dbe7fb" stroke="#2f5fd0" stroke-width="1" stroke-linejoin="round"/></svg>


<div id="ed" class="abs">
  <div id="gut" class="abs"></div>
  <div class="abs" style="left:54px;top:4px;width:864px;height:16px;background:#e8f2ff"></div>
  <div class="ln" style="top:5px">1</div>
  <div class="cl" style="top:5px">(<span class="k">function</span> <span class="v">process</span>( <span class="c">/*RESTAPIRequest*/</span> <span class="v">request</span>, <span class="c">/*RESTAPIResponse*/</span> <span class="v">response</span>) {</div>
  <div class="ln" style="top:21px">2</div>
  <div class="ln" style="top:37px">3</div>
  <div class="cl" style="top:37px">    <span class="k">var</span> <span class="v">reqBody</span> = <span class="v">request</span>.body.data;</div>
  <div class="ln" style="top:53px">4</div>
  <div class="cl" style="top:53px">    <span class="c">//var short1 =request.body.data.getHeader("short_description");</span></div>
  <div class="ln" style="top:69px">5</div>
  <div class="cl" style="top:69px">    <span class="c">//var call =request.getHeader("caller_id");</span></div>
  <div class="ln" style="top:85px">6</div>
  <div class="cl" style="top:85px">    <span class="k">var</span> <span class="v">short1</span>=<span class="v">reqBody</span>.short_description;</div>
  <div class="ln" style="top:101px">7</div>
  <div class="cl" style="top:101px">    <span class="k">var</span> <span class="v">call</span>=<span class="v">reqBody</span>.caller_id;</div>
  <div class="ln" style="top:117px">8</div>
  <div class="cl" style="top:117px">    <span class="k">var</span> <span class="v">gr</span> = <span class="k">new</span> <i style="color:#111;-webkit-text-stroke:0.35px #111">GlideRecord</i>(<i class="s">'incident'</i>);</div>
  <div class="ln" style="top:133px">9</div>
  <div class="cl" style="top:133px">    <span class="v">gr</span>.initialize();</div>
  <div class="ln" style="top:149px">10</div>
  <div class="cl" style="top:149px">    <span class="v">gr</span>.correlation_id = <span class="v">reqBody</span>.sys_id;</div>
  <div class="ln" style="top:165px">11</div>
  <div class="cl" style="top:165px">    <span class="v">gr</span>.short_description = <span class="v">short1</span>;</div>
  <div class="ln" style="top:181px">12</div>
  <div class="cl" style="top:181px">    <span class="v">gr</span>.caller_id = <span class="v">call</span>;</div>
  <div class="ln" style="top:197px">13</div>
  <div class="cl" style="top:197px">    <span class="k">var</span> <span class="v">id</span> = <span class="v">gr</span>.insert();</div>
  <div class="ln" style="top:213px">14</div>
  <div class="ln" style="top:229px">15</div>
  <div class="cl" style="top:229px">    <span class="k">return</span> {</div>
  <div class="ln" style="top:245px">16</div>
  <div class="cl" style="top:245px">        <span class="s">"sys_id"</span>: <span class="v">id</span></div>
  <div class="ln" style="top:261px">17</div>
  <div class="cl" style="top:261px">    };</div>
  <div class="ln" style="top:277px">18</div>
  <div class="ln" style="top:293px">19</div>
  <div class="ln" style="top:309px">20</div>
  <div class="cl" style="top:309px">})(request, response);</div>
  <div class="abs fold" style="left:46.5px;top:11px"></div>
  <div class="abs fold" style="left:46.5px;top:235px"></div>
</div>

<div id="sb" class="abs"><div id="thumb" class="abs"></div><svg class="abs" style="left:4px;top:7px" width="9" height="5" viewBox="0 0 9 5"><path d="M0.5 4.5L4.5 0.5L8.5 4.5Z" fill="#505050"/></svg><svg class="abs" style="left:4px;top:585px" width="9" height="5" viewBox="0 0 9 5"><path d="M0.5 0.5L4.5 4.5L8.5 0.5Z" fill="#505050"/></svg></div>

<div class="abs" style="left:1073px;top:651px;font-size:19.9px;line-height:22px;color:#c6c6c6;white-space:nowrap">Activate Windows</div>
<div class="abs" style="left:1073px;top:677px;font-size:15.05px;line-height:17px;color:#c6c6c6;white-space:nowrap">Go to Settings to activate Windows.</div>
<div id="task" class="abs">
  <!-- windows logo -->
  <svg class="abs" style="left:15px;top:11px" width="18" height="18" viewBox="0 0 18 18"><path d="M0.9 2.4L7 1.6V8H0.9ZM7.9 1.5L17 0.9V8H7.9ZM0.9 8.8H7V15.3L0.9 14.6ZM7.9 8.8H17V17L7.9 16.2Z" fill="#fff"/><path d="M7.45 1V17M0.5 8.4H17.5" stroke="#151515" stroke-width="0.9"/></svg>
  <svg class="abs" style="left:63px;top:11px" width="18" height="18" viewBox="0 0 18 18"><circle cx="9" cy="9" r="6.4" fill="none" stroke="#fff" stroke-width="2.5"/></svg>
  <!-- edge -->
  <svg class="abs" style="left:111px;top:8px" width="24" height="24" viewBox="0 0 24 24"><path d="M2.2 11.5C2.8 5.5 7 1.6 12.5 1.6C18.4 1.6 22.2 5.6 22.2 11.6V13.6H8.2C8.5 16.8 10.8 18.5 14 18.5C16.6 18.5 18.7 17.8 20.8 16.6V20.8C18.7 22 16.2 22.5 13.3 22.5C7.3 22.5 3.4 18.8 3.4 13.2C3.4 9.6 5.3 6.6 8.5 5.2C6.5 6.6 4.6 8.6 4.1 10.4C5.6 7.4 8.5 6 11.6 6C14.8 6 16.6 7.8 16.8 10.2H8.3C8.4 10.3 8.3 10.4 8.2 10.4" fill="#1a7bd8"/><path d="M8.4 10.3H16.8C16.6 7.8 14.8 6 11.6 6C9.6 6 8.3 7.2 8.4 10.3Z" fill="#2b2b2d"/></svg>
  <!-- explorer -->
  <svg class="abs" style="left:160px;top:9px" width="24" height="22" viewBox="0 0 24 22"><path d="M1 2H8.5L10.5 4H22.5V20H1Z" fill="#f0c95c"/><rect x="1" y="4.6" width="21.5" height="15.4" fill="#f8da84"/><path d="M6 20V13.5A1.5 1.5 0 0 1 7.5 12H16A1.5 1.5 0 0 1 17.5 13.5V20H14V15.5H9.5V20Z" fill="#35a2e3"/><rect x="9.5" y="15.5" width="4.5" height="4.5" fill="#fbeab0"/></svg>
  <!-- mail -->
  <svg class="abs" style="left:208px;top:8px" width="26" height="24" viewBox="0 0 26 24"><path d="M1 8L13 0.5L25 8Z" fill="#0c64c0"/><rect x="1" y="8" width="24" height="15" fill="#1f90e2"/><path d="M13 15L25 8V23Z" fill="#34b3f1"/><path d="M3 8.5H23L13 14.8Z" fill="#f2f2f2"/></svg>
  <!-- store -->
  <svg class="abs" style="left:257px;top:7px" width="25" height="25" viewBox="0 0 25 25"><path d="M7.8 7V4.6A4.7 4.7 0 0 1 17.2 4.6V7" fill="none" stroke="#f2f2f2" stroke-width="1.3"/><path d="M1 6.5H24V23A1.5 1.5 0 0 1 22.5 24.5H2.5A1.5 1.5 0 0 1 1 23Z" fill="#fff"/><rect x="7" y="10" width="5" height="5" fill="#f25022"/><rect x="13" y="10" width="5" height="5" fill="#7fba00"/><rect x="7" y="16" width="5" height="5" fill="#00a4ef"/><rect x="13" y="16" width="5" height="5" fill="#ffb900"/></svg>
  <!-- camera app -->
  <svg class="abs" style="left:309px;top:8px" width="22" height="23" viewBox="0 0 22 23"><g transform="rotate(-35 11 11.5)"><ellipse cx="11" cy="11.5" rx="10" ry="10.6" fill="#0b3f5e" stroke="#2fb0e0" stroke-width="1.2"/><ellipse cx="11.6" cy="12" rx="7.2" ry="7" fill="#1a6a90"/><ellipse cx="11.4" cy="11.8" rx="6.6" ry="6.2" fill="#62b94a"/><ellipse cx="10" cy="10.6" rx="5.8" ry="5.2" fill="#fff"/></g></svg>
  <!-- chrome -->
  <div class="abs" style="left:344px;top:0;width:44px;height:40px;background:#3b3b3d"></div>
  <div class="abs" style="left:344px;top:38px;width:48px;height:2px;background:#87cdf5"></div>
  <div class="abs" style="left:397px;top:38px;width:40px;height:2px;background:#87cdf5"></div>
  <svg class="abs" style="left:356px;top:8px" width="24" height="24" viewBox="0 0 24 24"><circle cx="12" cy="12" r="11.5" fill="#db4437"/><path d="M12 12L1.9 6.4A11.5 11.5 0 0 0 12 23.5L17.5 12Z" fill="#0f9d58"/><path d="M12 12L22.6 7.6A11.5 11.5 0 0 1 10.7 23.45L17.2 12.5Z" fill="#ffcd40"/><path d="M12 6.5H22.6" stroke="none"/><circle cx="12" cy="12" r="5.2" fill="#fff"/><circle cx="12" cy="12" r="4.1" fill="#4285f4"/></svg>
  <!-- notepad++ -->
  <svg class="abs" style="left:405px;top:7px" width="24" height="25" viewBox="0 0 24 25"><defs><linearGradient id="npg" x1="0" y1="0" x2="0" y2="1"><stop offset="0" stop-color="#f4f4f2"/><stop offset="0.38" stop-color="#eef3e4"/><stop offset="0.55" stop-color="#bfe85a"/><stop offset="1" stop-color="#2fa52a"/></linearGradient></defs><path d="M1 1.5H14L18.5 6V23.5H1Z" fill="url(#npg)" stroke="#d9dbd2" stroke-width="0.8"/><path d="M14 1.5V6H18.5" fill="#e3e5de"/><path d="M3 4H12M3 6H12M3 8H14" stroke="#d6d8d0" stroke-width="0.7"/><path d="M5.2 9.2Q5.2 8.2 6.2 8.2M5.2 9V15.5M7.9 8.2V15.5" fill="none" stroke="#111" stroke-width="1.2"/><path d="M9.3 12H11.3M12 12H14" stroke="#111" stroke-width="1.1"/><path d="M12.2 16.5L20.6 1.6L23 3L14.6 18Z" fill="#e0b030" stroke="#9a7414" stroke-width="0.5"/><path d="M20.6 1.6L21.5 0.6L23.4 1.8L23 3Z" fill="#c0483a"/></svg>
  <!-- people -->
  <svg class="abs" style="left:1085px;top:11px" width="17" height="17" viewBox="0 0 17 17"><circle cx="11.5" cy="4" r="2.7" fill="none" stroke="#fff" stroke-width="1.1"/><path d="M7.5 11.5A4.2 4.2 0 0 1 15.8 11.5" fill="none" stroke="#fff" stroke-width="1.1"/><circle cx="5.2" cy="8" r="2.5" fill="none" stroke="#fff" stroke-width="1.1"/><path d="M1 15.8A4.2 4.2 0 0 1 9.4 15.8" fill="none" stroke="#fff" stroke-width="1.1"/></svg>
  <svg class="abs" style="left:1122px;top:15px" width="14" height="9" viewBox="0 0 14 9"><path d="M1 7.5L7 1.5L13 7.5" fill="none" stroke="#fff" stroke-width="1.3"/></svg>
  <!-- battery plug -->
  <svg class="abs" style="left:1145px;top:14px" width="17" height="11" viewBox="0 0 17 11"><path d="M1.5 0V3M4 0V3M0.5 3H5V5.5A2.2 2.2 0 0 1 0.5 5.5Z" fill="#fff" stroke="#fff" stroke-width="0.9"/><path d="M2.8 7.5V10" stroke="#fff" stroke-width="1"/><rect x="5.5" y="3" width="10" height="7" fill="none" stroke="#fff" stroke-width="1"/><rect x="7.5" y="5" width="6" height="3" fill="#fff"/><rect x="15.5" y="5" width="1.3" height="3" fill="#fff"/></svg>
  <!-- wifi -->
  <svg class="abs" style="left:1171px;top:12px" width="15" height="15" viewBox="0 0 15 15"><path d="M1 13.5A12 12 0 0 1 13 1.5M4 13.5A9 9 0 0 1 13 4.5M7 13.5A6 6 0 0 1 13 7.5" fill="none" stroke="#fff" stroke-width="1.1"/><circle cx="12.3" cy="12.8" r="1.6" fill="#fff"/></svg>
  <!-- volume -->
  <svg class="abs" style="left:1192px;top:14px" width="18" height="13" viewBox="0 0 18 13"><path d="M1 4.5H4L8 1V12L4 8.5H1Z" fill="none" stroke="#fff" stroke-width="1.1" stroke-linejoin="round"/><path d="M10.5 4.5A2.8 2.8 0 0 1 10.5 8.5M12.7 2.6A5.5 5.5 0 0 1 12.7 10.4" fill="none" stroke="#fff" stroke-width="1.1"/><path d="M14.8 0.8A8 8 0 0 1 14.8 12.2" fill="none" stroke="#999" stroke-width="1.1"/></svg>
  <div class="abs" style="left:1218px;top:13px;font-size:11px;line-height:13px;color:#fff;white-space:nowrap">ENG</div>
  <div class="abs" style="left:1259px;top:5px;font-size:11.4px;line-height:13px;color:#fff;white-space:nowrap">4:18 PM</div>
  <div class="abs" style="left:1258px;top:22px;font-size:11.7px;line-height:13px;color:#fff;white-space:nowrap">4/8/2020</div>
  <svg class="abs" style="left:1324px;top:11px" width="18" height="17" viewBox="0 0 18 17"><path d="M1 1H17V12.5H12L9 15.5L6 12.5H1Z" fill="none" stroke="#fff" stroke-width="1.1" stroke-linejoin="round"/></svg>
  <div class="abs" style="left:1361px;top:0;width:1px;height:40px;background:#6a6b6e"></div>
</div>
</body></html>
